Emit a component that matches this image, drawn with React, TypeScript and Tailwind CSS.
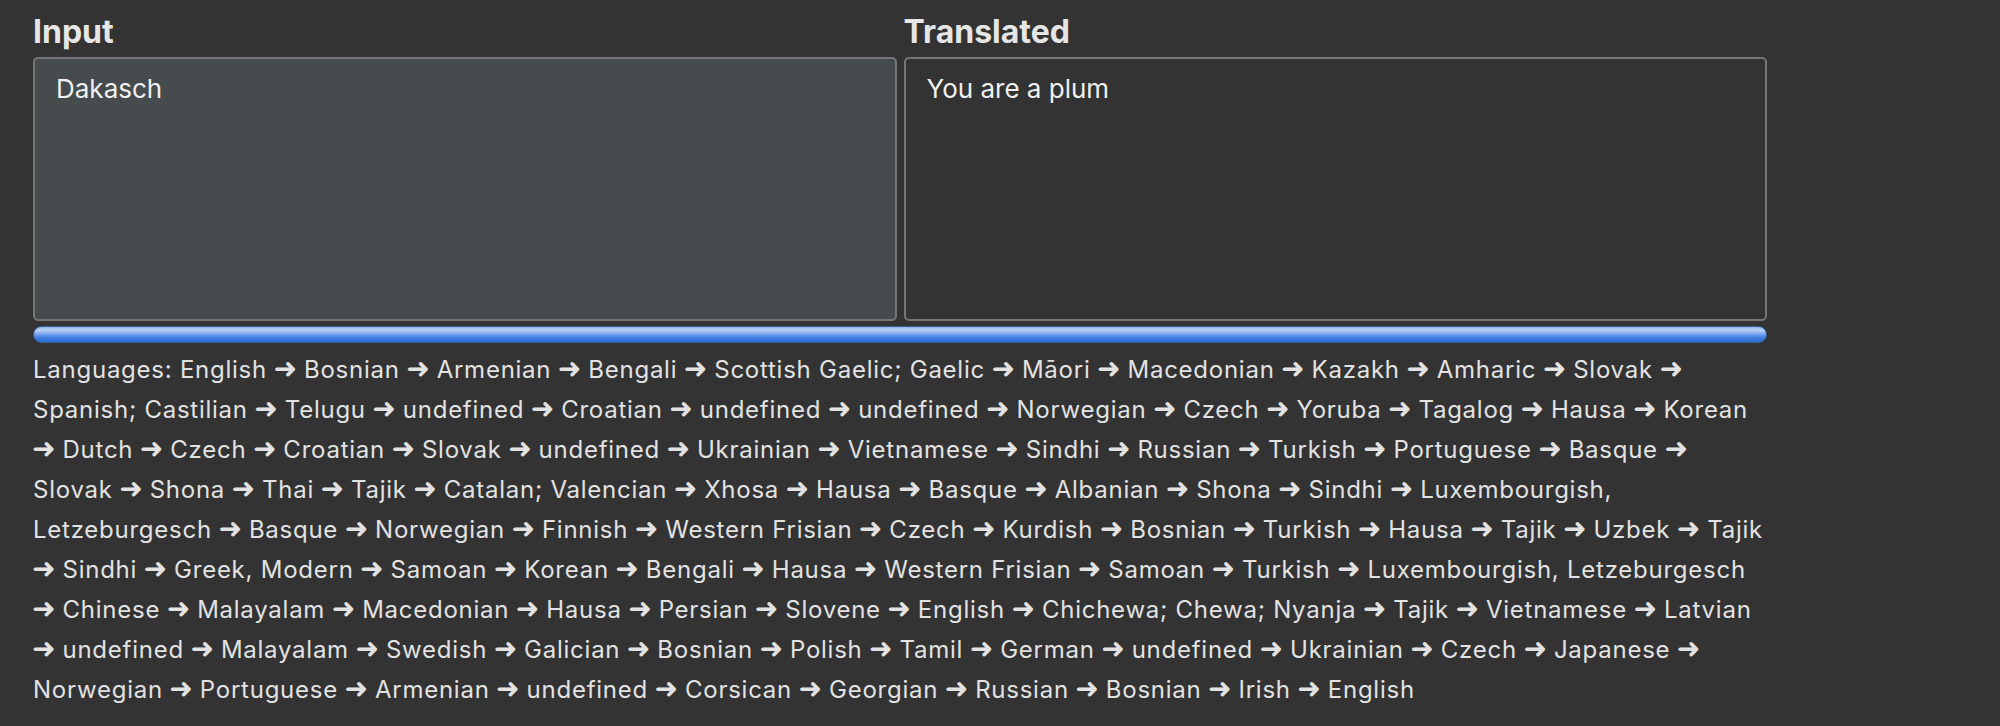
import React from "react";

const lines: string[] = [
  "Languages: English ➜ Bosnian ➜ Armenian ➜ Bengali ➜ Scottish Gaelic; Gaelic ➜ Māori ➜ Macedonian ➜ Kazakh ➜ Amharic ➜ Slovak ➜",
  "Spanish; Castilian ➜ Telugu ➜ undefined ➜ Croatian ➜ undefined ➜ undefined ➜ Norwegian ➜ Czech ➜ Yoruba ➜ Tagalog ➜ Hausa ➜ Korean",
  "➜ Dutch ➜ Czech ➜ Croatian ➜ Slovak ➜ undefined ➜ Ukrainian ➜ Vietnamese ➜ Sindhi ➜ Russian ➜ Turkish ➜ Portuguese ➜ Basque ➜",
  "Slovak ➜ Shona ➜ Thai ➜ Tajik ➜ Catalan; Valencian ➜ Xhosa ➜ Hausa ➜ Basque ➜ Albanian ➜ Shona ➜ Sindhi ➜ Luxembourgish,",
  "Letzeburgesch ➜ Basque ➜ Norwegian ➜ Finnish ➜ Western Frisian ➜ Czech ➜ Kurdish ➜ Bosnian ➜ Turkish ➜ Hausa ➜ Tajik ➜ Uzbek ➜ Tajik",
  "➜ Sindhi ➜ Greek, Modern ➜ Samoan ➜ Korean ➜ Bengali ➜ Hausa ➜ Western Frisian ➜ Samoan ➜ Turkish ➜ Luxembourgish, Letzeburgesch",
  "➜ Chinese ➜ Malayalam ➜ Macedonian ➜ Hausa ➜ Persian ➜ Slovene ➜ English ➜ Chichewa; Chewa; Nyanja ➜ Tajik ➜ Vietnamese ➜ Latvian",
  "➜ undefined ➜ Malayalam ➜ Swedish ➜ Galician ➜ Bosnian ➜ Polish ➜ Tamil ➜ German ➜ undefined ➜ Ukrainian ➜ Czech ➜ Japanese ➜",
  "Norwegian ➜ Portuguese ➜ Armenian ➜ undefined ➜ Corsican ➜ Georgian ➜ Russian ➜ Bosnian ➜ Irish ➜ English",
];

function Line({ text }: { text: string }) {
  const parts = text.split("➜");
  return (
    <div className="whitespace-nowrap">
      {parts.map((p, i) => (
        <React.Fragment key={i}>
          {p}
          {i < parts.length - 1 && (
            <span className="inline-flex w-[22px] justify-center font-['DejaVu_Sans'] text-[28px] font-bold leading-none tracking-normal">
              ➜
            </span>
          )}
        </React.Fragment>
      ))}
    </div>
  );
}

export default function App() {
  return (
    <div className="min-h-[726px] bg-[#333333] font-['Inter','Noto_Sans',sans-serif] text-[#e4e4e4]">
      <div className="ml-[33px] w-[1734px] pt-[16px]">
        <div className="grid grid-cols-2 gap-[7px]">
          <div className="flex flex-col">
            <h2 className="mb-[9px] text-[32px] font-bold leading-[32px] text-[#e6e6e6]">Input</h2>
            <div className="h-[264px] rounded-[5px] border-2 border-[#767676] bg-[#464b4e] px-[21px] pt-[14px] text-[26px] leading-[32px] text-[#f0f0f0]">
              Dakasch
            </div>
          </div>
          <div className="flex flex-col">
            <h2 className="mb-[9px] text-[32px] font-bold leading-[32px] text-[#e6e6e6]">Translated</h2>
            <div className="h-[264px] rounded-[5px] border-2 border-[#767676] bg-[#333333] px-[21px] pt-[14px] text-[26px] leading-[32px] text-[#f0f0f0]">
              You are a plum
            </div>
          </div>
        </div>
        <div className="mt-[5px] h-[17px] w-full rounded-full border border-[#3a5f99] bg-[linear-gradient(to_bottom,#8fb2ea_0%,#b9d0f3_18%,#9cbcef_35%,#5f95e8_55%,#3b7be0_75%,#2f6bcb_100%)]" />
        <div className="mt-[7px] text-[24px] leading-[40px] tracking-[0.75px] text-[#e2e2e2]">
          {lines.map((l, i) => (
            <Line key={i} text={l} />
          ))}
        </div>
      </div>
    </div>
  );
}
